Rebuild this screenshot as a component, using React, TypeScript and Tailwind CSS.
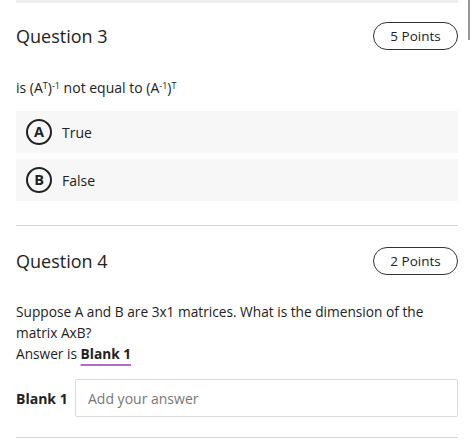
import React from 'react'

const FONT = { fontFamily: '"Open Sans", "Noto Sans", sans-serif' }

function PointsPill({ points }: { points: number }) {
  return (
    <div className="h-[28px] w-[85px] rounded-full border border-[#333] flex items-center justify-center text-[13.5px] font-medium text-[#222]">
      {points} Points
    </div>
  )
}

function Option({ letter, label }: { letter: string; label: string }) {
  return (
    <div className="h-[42px] bg-[#f7f7f7] flex items-center pl-[10px]">
      <div className="w-[26px] h-[26px] rounded-full border-2 border-[#222] flex items-center justify-center text-[14.5px] font-bold text-[#222]">
        {letter}
      </div>
      <span className="ml-[10px] text-[14px] text-[#222]">{label}</span>
    </div>
  )
}

export default function App() {
  return (
    <div className="relative w-[474px] h-[448px] overflow-hidden bg-white text-[#222]" style={FONT}>
      {/* bout du bloc précédent */}
      <div className="mx-4 h-[3px] bg-[#efefef]" />

      {/* scrollbar */}
      <div className="absolute right-[4px] top-0 w-[2px] h-[40px] bg-[#999]" />

      <div className="px-4">
        {/* Question 3 */}
        <div className="mt-[19px] flex items-center justify-between">
          <h2 className="text-[18px] text-[#222]">Question 3</h2>
          <PointsPill points={5} />
        </div>

        <p className="mt-[28px] text-[14px] leading-[20px]">
          is (A<sup className="text-[9px]">T</sup>)<sup className="text-[9px]">-1</sup> not equal to (A
          <sup className="text-[9px]">-1</sup>)<sup className="text-[9px]">T</sup>
        </p>

        <div className="mt-[13px] flex flex-col gap-[6px]">
          <Option letter="A" label="True" />
          <Option letter="B" label="False" />
        </div>

        <div className="mt-[24px] h-px bg-[#d6d6d6]" />

        {/* Question 4 */}
        <div className="mt-[21px] flex items-center justify-between">
          <h2 className="text-[18px] text-[#222]">Question 4</h2>
          <PointsPill points={2} />
        </div>

        <p className="mt-[26px] text-[13.7px] leading-[21px]">
          Suppose A and B are 3x1 matrices. What is the dimension of the matrix AxB?
          <br />
          Answer is{' '}
          <span className="font-bold underline decoration-[#b56ad2] decoration-2 underline-offset-[5px]">
            Blank 1
          </span>
        </p>

        <div className="mt-[15px] flex items-center">
          <span className="w-[59px] text-[14px] font-bold">Blank 1</span>
          <input
            className="flex-1 h-[38px] border border-[#d9d9d9] rounded-[2px] px-3 text-[14px] outline-none placeholder:text-[#777]"
            placeholder="Add your answer"
            style={FONT}
          />
        </div>

        <div className="mt-[20px] h-px bg-[#d6d6d6]" />
      </div>
    </div>
  )
}
